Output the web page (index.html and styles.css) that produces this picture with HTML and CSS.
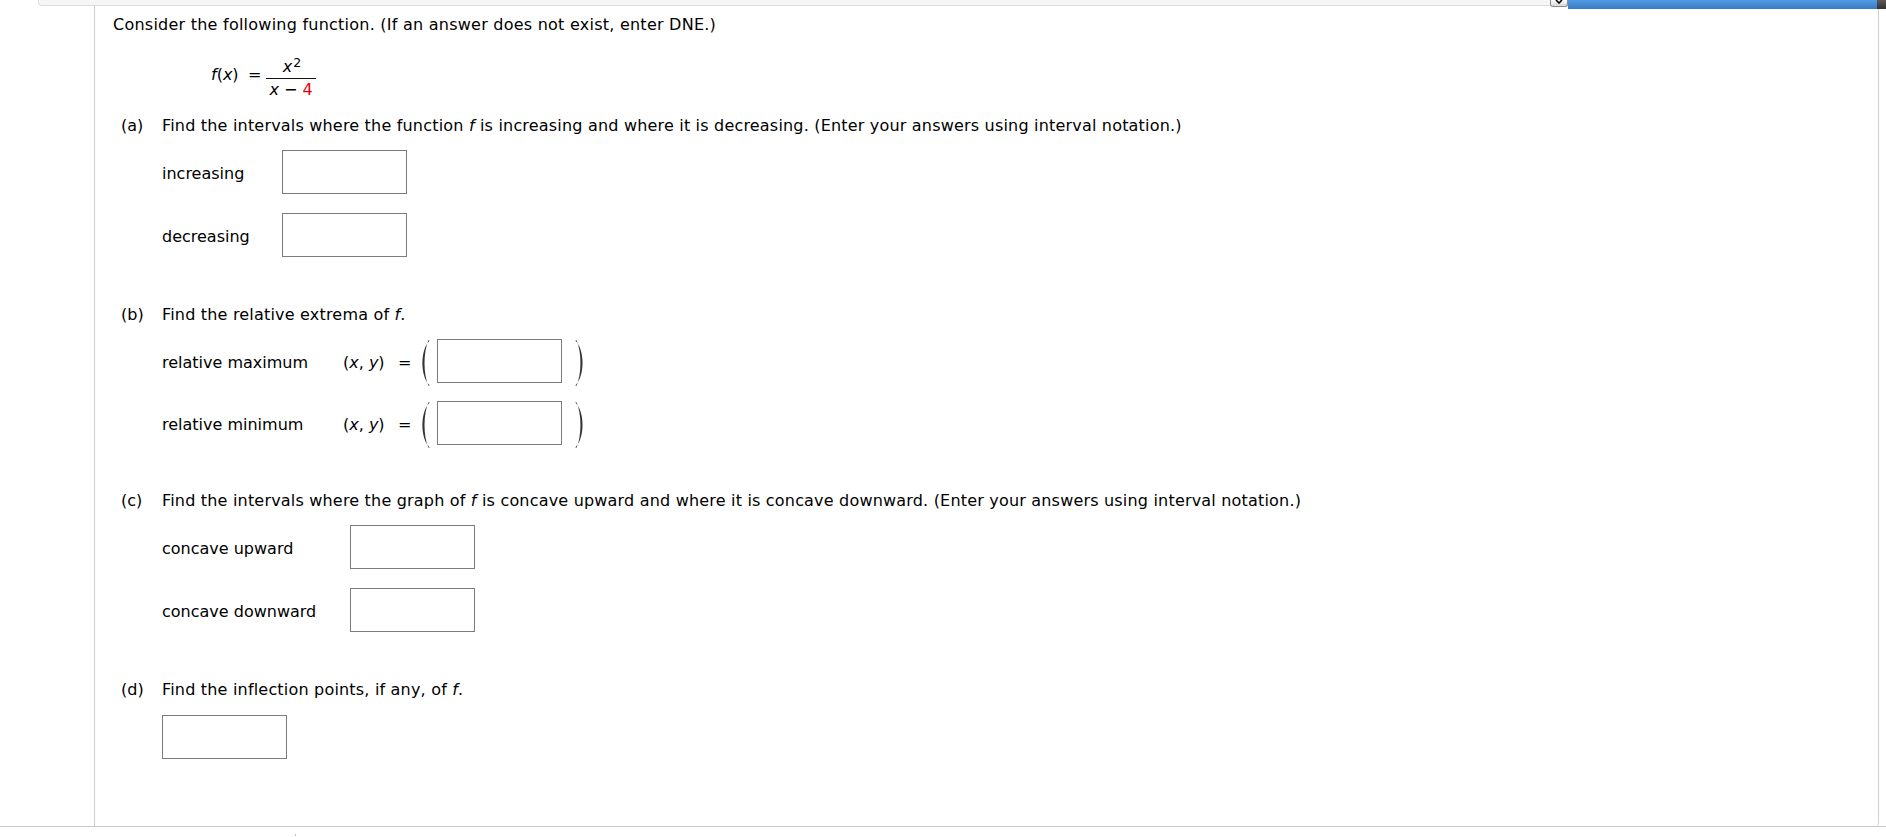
FILE: index.html
```html
<!DOCTYPE html>
<html lang="en">
<head>
<meta charset="utf-8">
<title>Consider the following function</title>
<link rel="stylesheet" href="styles.css">
</head>
<body>
<div class="top">
  <div class="top-gap"></div>
  <div class="tabs"></div>
  <div class="drop"><svg class="chev" viewBox="0 0 8 4" width="8" height="4"><path d="M1 0 L4 3 L7 0" fill="none" stroke="#000" stroke-width="1.6"/></svg></div>
  <div class="blue"></div>
  <div class="dark"></div>
</div>
<div class="frame">
  <p class="intro">Consider the following function. (If an answer does not exist, enter DNE.)</p>

  <div class="formula">
    <span class="fx"><i>f</i>(<i>x</i>)</span>
    <span class="feq">=</span>
    <span class="frac">
      <span class="num"><i>x</i><sup>2</sup></span>
      <span class="den"><i>x</i> − <span class="red">4</span></span>
    </span>
  </div>

  <div class="part part-a">
    <span class="pl">(a)</span>
    <span class="pt">Find the intervals where the function <i>f</i> is increasing and where it is decreasing. (Enter your answers using interval notation.)</span>
  </div>
  <div class="grid grid-a">
    <span class="lbl">increasing</span>
    <input class="ans" type="text">
    <span class="lbl">decreasing</span>
    <input class="ans" type="text">
  </div>

  <div class="part part-b">
    <span class="pl">(b)</span>
    <span class="pt">Find the relative extrema of <i>f</i>.</span>
  </div>
  <div class="grid grid-b">
    <span class="lbl">relative maximum</span>
    <div class="pair">
      <span class="xy">(<i>x</i>, <i>y</i>)</span>
      <span class="eq">=</span>
      <svg class="paren" viewBox="0 0 10 46" width="10" height="46"><path d="M9.7 0.5 C0 10 0 36 9.7 45.5 L8.5 45.8 C3.2 34 3.2 12 8.5 0.2 Z" fill="#333"/></svg>
      <input class="ans" type="text">
      <svg class="paren paren-r" viewBox="0 0 10 46" width="10" height="46"><path d="M0.3 0.5 C10 10 10 36 0.3 45.5 L1.5 45.8 C6.8 34 6.8 12 1.5 0.2 Z" fill="#333"/></svg>
    </div>
    <span class="lbl">relative minimum</span>
    <div class="pair">
      <span class="xy">(<i>x</i>, <i>y</i>)</span>
      <span class="eq">=</span>
      <svg class="paren" viewBox="0 0 10 46" width="10" height="46"><path d="M9.7 0.5 C0 10 0 36 9.7 45.5 L8.5 45.8 C3.2 34 3.2 12 8.5 0.2 Z" fill="#333"/></svg>
      <input class="ans" type="text">
      <svg class="paren paren-r" viewBox="0 0 10 46" width="10" height="46"><path d="M0.3 0.5 C10 10 10 36 0.3 45.5 L1.5 45.8 C6.8 34 6.8 12 1.5 0.2 Z" fill="#333"/></svg>
    </div>
  </div>

  <div class="part part-c">
    <span class="pl">(c)</span>
    <span class="pt">Find the intervals where the graph of <i>f</i> is concave upward and where it is concave downward. (Enter your answers using interval notation.)</span>
  </div>
  <div class="grid grid-c">
    <span class="lbl">concave upward</span>
    <input class="ans" type="text">
    <span class="lbl">concave downward</span>
    <input class="ans" type="text">
  </div>

  <div class="part part-d">
    <span class="pl">(d)</span>
    <span class="pt">Find the inflection points, if any, of <i>f</i>.</span>
  </div>
  <div class="single">
    <input class="ans" type="text">
  </div>
</div>
<div class="rule"></div>
<div class="tick"></div>
</body>
</html>
```

FILE: styles.css
```css
html, body {
  margin: 0;
  padding: 0;
  background: #fff;
}

body {
  font-family: "DejaVu Sans", Verdana, sans-serif;
  font-size: 16px;
  line-height: 20px;
  color: #000;
}

/* ---------- top strip ---------- */
.top {
  display: flex;
  align-items: flex-start;
  height: 6px;
  position: relative;
  z-index: 1;
}
.top-gap {
  width: 38px;
  flex: none;
}
.tabs {
  flex: 1;
  height: 6px;
  box-sizing: border-box;
  background: #f6f6f6;
  border-left: 1px solid #dcdcdc;
  border-bottom: 1px solid #dcdcdc;
  border-bottom-left-radius: 4px;
}
.drop {
  width: 18px;
  height: 7px;
  flex: none;
  box-sizing: border-box;
  border: 1px solid #8a8a8a;
  border-top: 0;
  border-radius: 0 0 3px 3px;
  background: linear-gradient(#ffffff, #d8d8d8);
  display: flex;
  justify-content: center;
  align-items: flex-start;
}
.chev {
  display: block;
}
.blue {
  width: 309px;
  height: 9px;
  flex: none;
  background: linear-gradient(#519ce4, #3a79c4);
}
.dark {
  width: 9px;
  height: 9px;
  flex: none;
  background: linear-gradient(#5a5a5a, #333);
}

/* ---------- frame ---------- */
.frame {
  margin-left: 94px;
  width: 1785px;
  height: 820px;
  box-sizing: border-box;
  border-left: 1px solid #cfcfcf;
  border-right: 1px solid #cfcfcf;
  border-bottom-right-radius: 3px;
  padding: 8.5px 0 0 18px;
}
.rule {
  height: 1px;
  background: #c8c8c8;
}
.tick {
  margin: 7px 0 0 295px;
  width: 1px;
  height: 2px;
  background: #bbb;
}

p {
  margin: 0;
}

.intro {
  white-space: nowrap;
  letter-spacing: 0.24px;
}

/* ---------- formula ---------- */
.formula {
  display: flex;
  align-items: flex-start;
  margin: 22.5px 0 0 98px;
}
.fx {
  width: 37px;
  flex: none;
  margin-top: 7.5px;
  white-space: nowrap;
}
.feq {
  width: 18px;
  flex: none;
  margin-top: 7.5px;
}
.frac {
  display: flex;
  flex-direction: column;
  align-items: stretch;
  width: 50px;
  flex: none;
}
.num {
  text-align: center;
  padding: 0 0 1px 2px;
  border-bottom: 1px solid #111;
  white-space: nowrap;
}
.num sup {
  font-size: 12.5px;
  line-height: 0;
  vertical-align: 5.5px;
  margin-left: 1px;
}
.den {
  text-align: center;
  padding: 1px 0 0;
  white-space: nowrap;
}
.red {
  color: #ee0000;
}

/* ---------- parts ---------- */
.part {
  display: flex;
  white-space: nowrap;
}
.pl {
  width: 41px;
  padding-left: 8px;
  flex: none;
}
.pt {
  letter-spacing: 0.19px;
}
.part-a { margin-top: 15.5px; }
.part-b { margin-top: 47.5px; }
.part-c { margin-top: 42.5px; }
.part-d { margin-top: 48px; }

.grid {
  display: grid;
  margin: 14.5px 0 0 49px;
  align-items: start;
  justify-content: start;
}
.grid-a {
  grid-template-columns: 120px auto;
  row-gap: 19px;
}
.grid-b {
  grid-template-columns: 181px auto;
  row-gap: 15px;
}
.grid-c {
  grid-template-columns: 188px auto;
  row-gap: 19px;
}
.lbl {
  padding-top: 13.5px;
  white-space: nowrap;
}

.ans {
  display: block;
  width: 125px;
  height: 44px;
  box-sizing: border-box;
  margin: 0;
  padding: 0 4px;
  border: 1px solid #7c7c7c;
  border-radius: 0;
  background: #fff;
  font: inherit;
  outline: none;
}

.pair {
  display: flex;
  align-items: flex-start;
}
.xy {
  width: 55px;
  flex: none;
  padding-top: 13.5px;
  white-space: nowrap;
}
.eq {
  width: 22px;
  flex: none;
  padding-top: 13.5px;
}
.paren {
  display: block;
  flex: none;
  margin-top: 1px;
  margin-right: 7px;
}
.paren-r {
  margin-right: 0;
  margin-left: 13px;
}

.single {
  margin: 15px 0 0 49px;
}
```
